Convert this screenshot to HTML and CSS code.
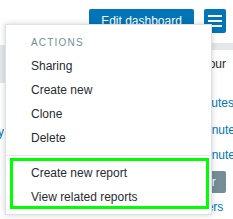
FILE: index.html
```html
<!DOCTYPE html>
<html lang="en">
<head>
<meta charset="utf-8">
<title>Dashboard actions</title>
<link rel="stylesheet" href="styles.css">
</head>
<body>
<div class="page">
  <header class="topbar">
    <button class="btn" type="button">Edit dashboard</button>
    <button class="btn btn-icon" type="button" aria-label="Actions">
      <svg width="14" height="12" viewBox="0 0 14 12" aria-hidden="true">
        <rect x="0" y="0" width="14" height="2" fill="#fff"/>
        <rect x="0" y="5" width="14" height="2" fill="#fff"/>
        <rect x="0" y="10" width="14" height="2" fill="#fff"/>
      </svg>
    </button>
  </header>
  <main class="main">
    <section class="col col-left">
      <div class="band band-left"></div>
      <div class="clip"><span class="link">Today</span></div>
    </section>
    <section class="col col-mid"></section>
    <section class="col col-right">
      <div class="band band-right"></div>
      <div class="row r1">1 hour</div>
      <div class="row r2 link">minutes</div>
      <div class="row r3 link">minute</div>
      <div class="row r4 link">minute</div>
      <div class="filter">Filter</div>
      <div class="row r6 link">Users</div>
    </section>
  </main>
  <nav class="menu">
    <h3 class="menu-title">Actions</h3>
    <ul class="menu-list">
      <li class="menu-item">Sharing</li>
      <li class="menu-item">Create new</li>
      <li class="menu-item">Clone</li>
      <li class="menu-item">Delete</li>
    </ul>
    <div class="menu-sep"></div>
    <ul class="menu-list menu-group">
      <li class="menu-item">Create new report</li>
      <li class="menu-item">View related reports</li>
    </ul>
  </nav>
</div>
</body>
</html>
```
FILE: styles.css
```css
* { box-sizing: border-box; }
html, body { margin: 0; padding: 0; }
body {
  background: #fff;
  font-family: "Liberation Sans", Arial, sans-serif;
  font-size: 12px;
  color: #1f2c33;
}
.page {
  position: relative;
  width: 233px;
  height: 219px;
  overflow: hidden;
}
.topbar {
  height: 43px;
  display: flex;
  justify-content: flex-end;
  align-items: flex-start;
  gap: 10px;
  padding: 9px 7px 0 0;
  background: #fff;
}
.btn {
  height: 24px;
  border: 0;
  border-radius: 2px;
  background: #0275b8;
  color: #fff;
  font-family: inherit;
  font-size: 12px;
  line-height: 24px;
  padding: 0 12px;
  margin: 0;
  width: 105px;
}
.btn-icon {
  width: 22px;
  padding: 0;
  display: flex;
  align-items: center;
  justify-content: center;
}
.main {
  display: flex;
  height: 176px;
}
.col { display: flex; flex-direction: column; }
.col-left { width: 5px; padding-top: 2px; }
.col-mid { width: 178px; }
.col-right { width: 50px; }
.band-left { height: 38px; background: #e4e8eb; }
.band-right { height: 9px; background: #e4e8eb; }
.clip {
  display: flex;
  justify-content: flex-end;
  width: 4px;
  overflow: hidden;
  white-space: nowrap;
  line-height: 24px;
  margin-top: 37px;
}
.link { color: #0275b8; }
.row {
  white-space: nowrap;
  line-height: 24px;
  padding-left: 9px;
}
.r1 { margin-top: 2px; }
.r2 { margin-top: 15px; }
.r3 { margin-top: 3px; padding-left: 16px; }
.r4 { margin-top: 1px; padding-left: 16px; }
.filter {
  margin-top: 4px;
  width: 43px;
  height: 22px;
  line-height: 22px;
  padding-left: 6px;
  background: #768d99;
  color: #fff;
  border-radius: 2px;
  white-space: nowrap;
}
.r6 { margin-top: 2px; }

.menu {
  position: absolute;
  left: 5px;
  top: 24px;
  width: 207px;
  height: 191px;
  padding: 6px 0 5px;
  background: #fff;
  border: 1px solid #dce1e5;
  box-shadow: 0 0 6px rgba(0, 0, 0, 0.18);
}
.menu-title {
  margin: 0;
  padding-left: 25px;
  font-size: 10px;
  font-weight: normal;
  letter-spacing: 1.2px;
  line-height: 23px;
  text-transform: uppercase;
  color: #768d99;
}
.menu-list {
  list-style: none;
  margin: 0;
  padding: 0;
}
.menu-item {
  line-height: 24px;
  padding-left: 25px;
  white-space: nowrap;
  color: #1f2c33;
}
.menu-sep {
  margin: 5px 0 2px;
  border-top: 1px solid #e4e8eb;
}
.menu-group {
  margin: 0 2px 0 4px;
  padding-top: 3px;
  outline: 3px solid #00ff00;
  outline-offset: -3px;
}
.menu-group .menu-item { padding-left: 21px; }
```
